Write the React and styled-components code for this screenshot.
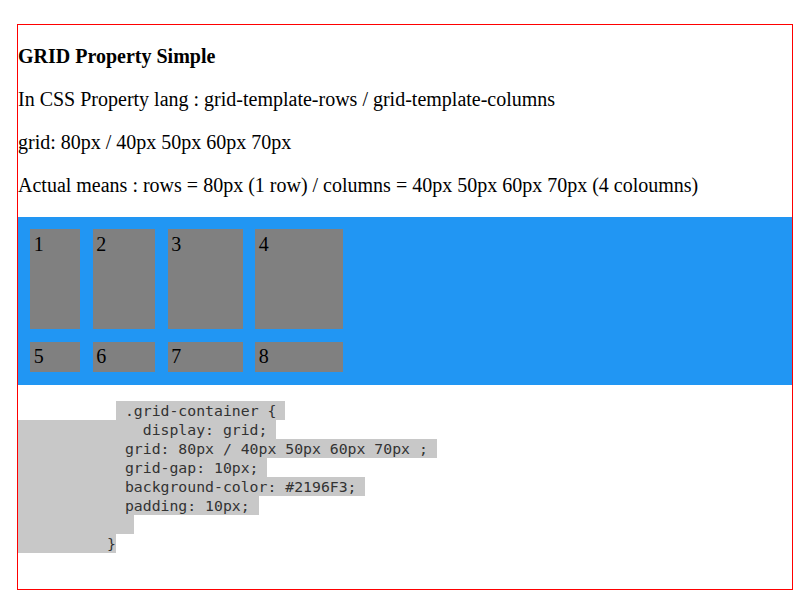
import React from 'react'
import styled, { createGlobalStyle } from 'styled-components'

const Global = createGlobalStyle`
    body {
        margin: 0;
        background: #fff;
        font-family: "Liberation Serif", "Times New Roman", serif;
        font-size: 20px;
        color: #000;
    }
`

const Frame = styled.div`
    box-sizing: border-box;
    width: 776px;
    margin: 24px 0 0 17px;
    border: 1px solid red;
`

const Heading = styled.p`
    margin: 20px 0;
    font-weight: 700;
    line-height: 23px;
`

const Text = styled.p`
    margin: 20px 0;
    line-height: 23px;
`

const Grid = styled.div`
    display: grid;
    grid-template-rows: 100px;
    grid-template-columns: 50px 62.5px 75px 87.5px;
    grid-gap: 12.5px;
    background-color: #2196F3;
    padding: 12px 12px 13px;
`

const Item = styled.div`
    background-color: grey;
    padding: 3.75px;
    line-height: 23px;
`

const Pre = styled.div`
    margin: 16px 0 36px;
    white-space: pre;
    font-family: "DejaVu Sans Mono", "Liberation Mono", monospace;
    font-size: 14.8px;
    line-height: 19px;
    color: #333;
`

const Code = styled.span`
    background-color: #c8c8c8;
    padding: 1px 0;
`

const code = ` .grid-container { 
              display: grid; 
            grid: 80px / 40px 50px 60px 70px ; 
            grid-gap: 10px; 
            background-color: #2196F3; 
            padding: 10px; 
             
          }`

const App = () => {
    return (
        <>
            <Global />
            <Frame>
                <Heading>GRID Property Simple</Heading>
                <Text>In CSS Property lang : grid-template-rows / grid-template-columns</Text>
                <Text>grid: 80px / 40px 50px 60px 70px</Text>
                <Text>Actual means : rows = 80px (1 row) / columns = 40px 50px 60px 70px (4 coloumns)</Text>
                <Grid>
                    {[1, 2, 3, 4, 5, 6, 7, 8].map(n => (
                        <Item key={n}>{n}</Item>
                    ))}
                </Grid>
                <Pre>{'           '}<Code>{code}</Code></Pre>
            </Frame>
        </>
    )
}

export default App
